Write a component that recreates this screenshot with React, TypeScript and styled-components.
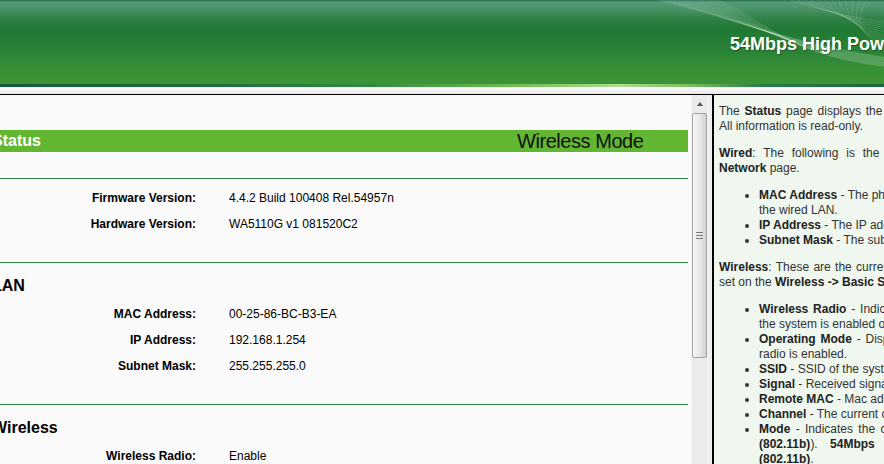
import React from "react";
import styled, { createGlobalStyle } from "styled-components";

const Global = createGlobalStyle`
  html, body { margin: 0; padding: 0; }
  body {
    width: 884px;
    height: 464px;
    overflow: hidden;
    background: #fafafa;
    font-family: "Liberation Sans", Arial, sans-serif;
  }
  * { box-sizing: border-box; }
`;

const Page = styled.div`
  width: 884px;
  height: 464px;
  display: flex;
  flex-direction: column;
  overflow: hidden;
`;

const Header = styled.header`
  position: relative;
  flex: none;
  height: 84px;
  display: flex;
  align-items: center;
  padding: 4px 0 0 730px;
  overflow: hidden;
  background: linear-gradient(
    180deg,
    #1d6a42 0px,
    #55997a 2px,
    #4a9368 9px,
    #2c8042 20px,
    #1f7934 30px,
    #2a8336 50px,
    #389036 70px,
    #3e9337 84px
  );
`;

const Waves = styled.svg`
  position: absolute;
  left: 640px;
  top: 0;
  width: 244px;
  height: 84px;
  pointer-events: none;
`;

const Title = styled.h1`
  position: relative;
  margin: 0;
  font-size: 18px;
  font-weight: bold;
  color: #ffffff;
  white-space: nowrap;
  text-shadow: 1px 1px 1px rgba(0, 40, 10, 0.45);
`;

const Stripe = styled.div`
  flex: none;
  height: 3px;
  background: linear-gradient(
    90deg,
    #155c3a 0%,
    #1c6f3c 25%,
    #2f8c3e 42%,
    #6dbd52 58%,
    #abdd8d 70%,
    #79c060 78%,
    #267e45 86%,
    #19683f 100%
  );
`;

const Band = styled.div`
  flex: none;
  height: 8px;
  background: linear-gradient(180deg, #fdfdfd 0%, #f0f0f0 60%, #e6e6e6 100%);
  border-bottom: 1px solid #000;
`;

const Frames = styled.div`
  flex: 1;
  min-height: 0;
  display: flex;
`;

const MainFrame = styled.div`
  flex: none;
  width: 708px;
  display: flex;
  background: #fafafa;
`;

const MainContent = styled.main`
  flex: 1;
  overflow: hidden;
  padding: 35px 3px 0 0;
`;

const Scrolled = styled.div`
  margin-left: -8px;
`;

const StatusBar = styled.div`
  display: grid;
  grid-template-columns: 525px 1fr;
  align-items: center;
  height: 22px;
  background: #63b632;
`;

const BarTitle = styled.span`
  font-size: 16px;
  font-weight: bold;
  color: #ffffff;
`;

const BarMode = styled.span`
  font-size: 20px;
  line-height: 22px;
  color: #111;
  letter-spacing: -0.45px;
  white-space: nowrap;
`;

const Section = styled.section`
  margin-top: 26px;
  padding-top: 5px;
  border-top: 1px solid #2c8845;
`;

const Heading = styled.h2`
  margin: 7px 0 3px;
  height: 22px;
  line-height: 22px;
  font-size: 16px;
  font-weight: bold;
  color: #000;
`;

const Row = styled.div`
  display: grid;
  grid-template-columns: 204px 1fr;
  column-gap: 33px;
  align-items: center;
  height: 26px;
  padding-top: 2px;
  font-size: 12px;
  color: #000;
`;

const Label = styled.span`
  text-align: right;
  font-weight: bold;
  white-space: nowrap;
`;

const Value = styled.span`
  white-space: nowrap;
`;

const ScrollBar = styled.div`
  flex: none;
  width: 17px;
  display: flex;
  flex-direction: column;
  background: #ebebeb;
  box-shadow: inset 1px 0 0 #f6f6f6, inset -1px 0 0 #f3f3f3;
`;

const ScrollButton = styled.div`
  height: 17px;
  display: flex;
  align-items: center;
  justify-content: center;
`;

const Arrow = styled.span`
  width: 0;
  height: 0;
  border-left: 3.5px solid transparent;
  border-right: 3.5px solid transparent;
  border-bottom: 4px solid #555;
`;

const Thumb = styled.div`
  margin: 1px 1px 0;
  height: 245px;
  border: 1px solid #a2a2a2;
  border-radius: 2px;
  background: linear-gradient(90deg, #f7f7f7 0%, #e6e6e6 55%, #d3d3d3 100%);
  display: flex;
  align-items: center;
  justify-content: center;
`;

const Grip = styled.span`
  width: 7px;
  height: 7px;
  background: repeating-linear-gradient(180deg, #7c7c7c 0 1px, transparent 1px 3px);
`;

const Divider = styled.div`
  flex: none;
  width: 6px;
  background: #efefef;
  border-right: 2px solid #000;
`;

const HelpFrame = styled.aside`
  flex: 1;
  overflow: hidden;
  background: #eff7ee;
  padding: 9px 0 0 5px;
  font-size: 12px;
  line-height: 15px;
  color: #333;
`;

const HelpPara = styled.div`
  margin: 0 0 12px;
`;

const HelpList = styled.ul`
  margin: 0 0 12px;
  padding-left: 40px;
  list-style: disc;
`;

const HelpLine = styled.span<{ $spread?: number }>`
  display: block;
  white-space: nowrap;
  word-spacing: ${(p) => p.$spread ?? 0}px;
`;

const B = styled.b`
  color: #222;
`;

const wavePaths: string[] = [];
for (let i = 0; i < 16; i++) {
  wavePaths.push(
    `M ${18 + i * 4} 0 C ${80 + i * 4} ${14 + i} ${150} ${44 + i * 0.8} ${250} ${58 + i * 0.6}`
  );
}
for (let i = 0; i < 12; i++) {
  wavePaths.push(`M ${150 + i * 7} 0 Q ${205} ${18 + i * 1.4} ${250} ${22 + i * 2.2}`);
}

type Item = { label: string; value: string };

const firmware: Item[] = [
  { label: "Firmware Version:", value: "4.4.2 Build 100408 Rel.54957n" },
  { label: "Hardware Version:", value: "WA5110G v1 081520C2" },
];

const lan: Item[] = [
  { label: "MAC Address:", value: "00-25-86-BC-B3-EA" },
  { label: "IP Address:", value: "192.168.1.254" },
  { label: "Subnet Mask:", value: "255.255.255.0" },
];

const wireless: Item[] = [{ label: "Wireless Radio:", value: "Enable" }];

const Rows = ({ items }: { items: Item[] }) => (
  <>
    {items.map((it) => (
      <Row key={it.label}>
        <Label>{it.label}</Label>
        <Value>{it.value}</Value>
      </Row>
    ))}
  </>
);

export default function App() {
  return (
    <Page>
      <Global />
      <Header>
        <Waves viewBox="0 0 244 84">
          {wavePaths.map((d, i) => (
            <path key={i} d={d} fill="none" stroke="#ffffff" strokeOpacity={0.22} strokeWidth={0.6} />
          ))}
        </Waves>
        <Title>54Mbps High Power Wireless Access Point</Title>
      </Header>
      <Stripe />
      <Band />
      <Frames>
        <MainFrame>
          <MainContent>
            <Scrolled>
              <StatusBar>
                <BarTitle>Status</BarTitle>
                <BarMode>Wireless Mode</BarMode>
              </StatusBar>
              <Section>
                <Rows items={firmware} />
              </Section>
              <Section>
                <Heading>LAN</Heading>
                <Rows items={lan} />
              </Section>
              <Section>
                <Heading>Wireless</Heading>
                <Rows items={wireless} />
              </Section>
            </Scrolled>
          </MainContent>
          <ScrollBar>
            <ScrollButton>
              <Arrow />
            </ScrollButton>
            <Thumb>
              <Grip />
            </Thumb>
          </ScrollBar>
        </MainFrame>
        <Divider />
        <HelpFrame>
          <HelpPara>
            <HelpLine $spread={1.5}>
              The <B>Status</B> page displays the device's current status and configuration.
            </HelpLine>
            <HelpLine>All information is read-only.</HelpLine>
          </HelpPara>
          <HelpPara>
            <HelpLine $spread={4.5}>
              <B>Wired</B>: The following is the information of LAN, as set on the
            </HelpLine>
            <HelpLine>
              <B>Network</B> page.
            </HelpLine>
          </HelpPara>
          <HelpList>
            <li>
              <HelpLine>
                <B>MAC Address</B> - The physical address of the device, as seen from
              </HelpLine>
              <HelpLine>the wired LAN.</HelpLine>
            </li>
            <li>
              <HelpLine>
                <B>IP Address</B> - The IP address of the device on the wired LAN.
              </HelpLine>
            </li>
            <li>
              <HelpLine>
                <B>Subnet Mask</B> - The subnet mask associated with the IP address.
              </HelpLine>
            </li>
          </HelpList>
          <HelpPara>
            <HelpLine $spread={1}>
              <B>Wireless</B>: These are the current settings or information for Wireless, as
            </HelpLine>
            <HelpLine>
              set on the <B>Wireless -&gt; Basic Settings</B> page.
            </HelpLine>
          </HelpPara>
          <HelpList>
            <li>
              <HelpLine $spread={1.5}>
                <B>Wireless Radio</B> - Indicates whether the wireless radio feature of
              </HelpLine>
              <HelpLine>the system is enabled or disabled.</HelpLine>
            </li>
            <li>
              <HelpLine $spread={1.5}>
                <B>Operating Mode</B> - Displays the current operating mode when the
              </HelpLine>
              <HelpLine>radio is enabled.</HelpLine>
            </li>
            <li>
              <HelpLine>
                <B>SSID</B> - SSID of the system in Client mode.
              </HelpLine>
            </li>
            <li>
              <HelpLine>
                <B>Signal</B> - Received signal strength of the AP in Client mode.
              </HelpLine>
            </li>
            <li>
              <HelpLine>
                <B>Remote MAC</B> - Mac address of the AP connected in Client mode.
              </HelpLine>
            </li>
            <li>
              <HelpLine>
                <B>Channel</B> - The current channel in use.
              </HelpLine>
            </li>
            <li>
              <HelpLine $spread={2}>
                <B>Mode</B> - Indicates the current wireless mode, 11Mbps
              </HelpLine>
              <HelpLine $spread={9}>
                <B>(802.11b)</B>). <B>54Mbps</B> <B>(802.11g)</B> or 54Mbps
              </HelpLine>
              <HelpLine>
                <B>(802.11b)</B>.
              </HelpLine>
            </li>
          </HelpList>
        </HelpFrame>
      </Frames>
    </Page>
  );
}
